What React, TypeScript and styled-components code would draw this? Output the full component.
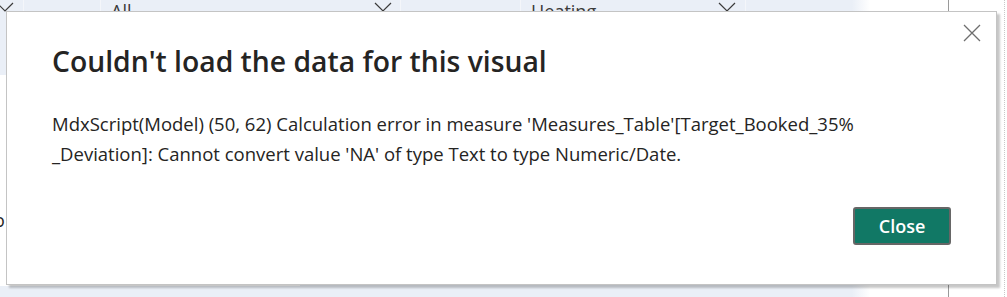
import React from "react";
import styled, { createGlobalStyle } from "styled-components";

const Global = createGlobalStyle`
  html, body { margin: 0; padding: 0; background: #ffffff; }
  body { font-family: "Open Sans", "Noto Sans", sans-serif; }
`;

const Page = styled.div`
  position: relative;
  width: 1007px;
  height: 297px;
  overflow: hidden;
  display: flex;
  background: #ffffff;
`;

const LeftPane = styled.div`
  width: 852px;
  flex: none;
  display: flex;
  flex-direction: column;
  background: #eaeff7;
`;

const HeaderRow = styled.div`
  display: flex;
  height: 75px;
  flex: none;
`;

const Cell = styled.div<{ $w: number; $line?: boolean }>`
  width: ${(p) => p.$w}px;
  flex: none;
  position: relative;
  box-sizing: border-box;
  border-left: ${(p) => (p.$line ? "1px solid #f4f6fa" : "none")};
  font-size: 18px;
  color: #3a3a3a;
  padding: 1px 0 0 10px;
  line-height: 20px;
`;

const Chevron = styled.svg<{ $x: number }>`
  position: absolute;
  top: 2px;
  left: ${(p) => p.$x}px;
`;

const Card = styled.div`
  flex: 1;
  background: #ffffff;
  margin-bottom: 11px;
  width: 300px;
  font-size: 17px;
  color: #252423;
  padding-top: 133px;
  box-sizing: border-box;
`;

const CutText = styled.span`
  display: inline-block;
  margin-left: -6px;
  font-size: 18px;
`;

const RightPane = styled.div`
  flex: 1;
  display: flex;
  background: linear-gradient(to right, #eaeff7 0px, #ffffff 18px, #ffffff 100%);
`;

const RightCol = styled.div<{ $w: number; $line?: string }>`
  width: ${(p) => p.$w}px;
  flex: none;
  border-right: ${(p) => p.$line || "none"};
`;

const Dialog = styled.div`
  position: absolute;
  left: 6px;
  top: 11px;
  width: 991px;
  height: 274px;
  box-sizing: border-box;
  background: #ffffff;
  border: 1px solid #c4c4c4;
  box-shadow: 3px 3px 2px rgba(0, 0, 0, 0.22);
  padding: 33px 45px 0 45px;
  display: flex;
  flex-direction: column;
`;

const CloseIcon = styled.button`
  position: absolute;
  top: 11px;
  right: 14px;
  width: 20px;
  height: 20px;
  padding: 0;
  border: none;
  background: transparent;
  display: flex;
  align-items: center;
  justify-content: center;
`;

const Title = styled.h1`
  margin: 0;
  font-family: "Open Sans", "Noto Sans", sans-serif;
  font-weight: 600;
  font-size: 28.3px;
  line-height: 32px;
  color: #252423;
`;

const Message = styled.p`
  margin: 32px 0 0 0;
  font-size: 18.5px;
  line-height: 30px;
  color: #252423;
`;

const Footer = styled.div`
  display: flex;
  justify-content: flex-end;
  margin-top: 38px;
`;

const PrimaryButton = styled.button`
  width: 98px;
  height: 38px;
  box-sizing: border-box;
  background: #117865;
  border: 2px solid #666666;
  border-radius: 3px;
  color: #ffffff;
  font-family: "Open Sans", "Noto Sans", sans-serif;
  font-weight: 600;
  font-size: 18px;
  padding: 0;
`;

const ChevronIcon = ({ x }: { x: number }) => (
  <Chevron $x={x} width="18" height="10" viewBox="0 0 18 10">
    <path d="M1 1 L9 9 L17 1" fill="none" stroke="#3b3b3b" strokeWidth="1.2" />
  </Chevron>
);

export default function App() {
  return (
    <>
      <Global />
      <Page>
        <LeftPane>
          <HeaderRow>
            <Cell $w={23}>
              <ChevronIcon x={-4} />
            </Cell>
            <Cell $w={77} $line />
            <Cell $w={300} $line>
              All
              <ChevronIcon x={273} />
            </Cell>
            <Cell $w={120} $line />
            <Cell $w={225} $line>
              Heating
              <ChevronIcon x={197} />
            </Cell>
            <Cell $w={107} $line />
          </HeaderRow>
          <Card>
            <CutText>o</CutText>
          </Card>
        </LeftPane>
        <RightPane>
          <RightCol $w={96} $line="1px solid #9a9a9a" />
          <RightCol $w={55} $line="1px dotted #c8c8c8" />
        </RightPane>
        <Dialog role="dialog">
          <CloseIcon aria-label="Close">
            <svg width="18" height="18" viewBox="0 0 18 18">
              <path d="M1 1 L17 17 M17 1 L1 17" stroke="#6e6e6e" strokeWidth="1.3" fill="none" />
            </svg>
          </CloseIcon>
          <Title>Couldn't load the data for this visual</Title>
          <Message>
            MdxScript(Model) (50, 62) Calculation error in measure 'Measures_Table'[Target_Booked_35%
            <br />
            _Deviation]: Cannot convert value 'NA' of type Text to type Numeric/Date.
          </Message>
          <Footer>
            <PrimaryButton>Close</PrimaryButton>
          </Footer>
        </Dialog>
      </Page>
    </>
  );
}
